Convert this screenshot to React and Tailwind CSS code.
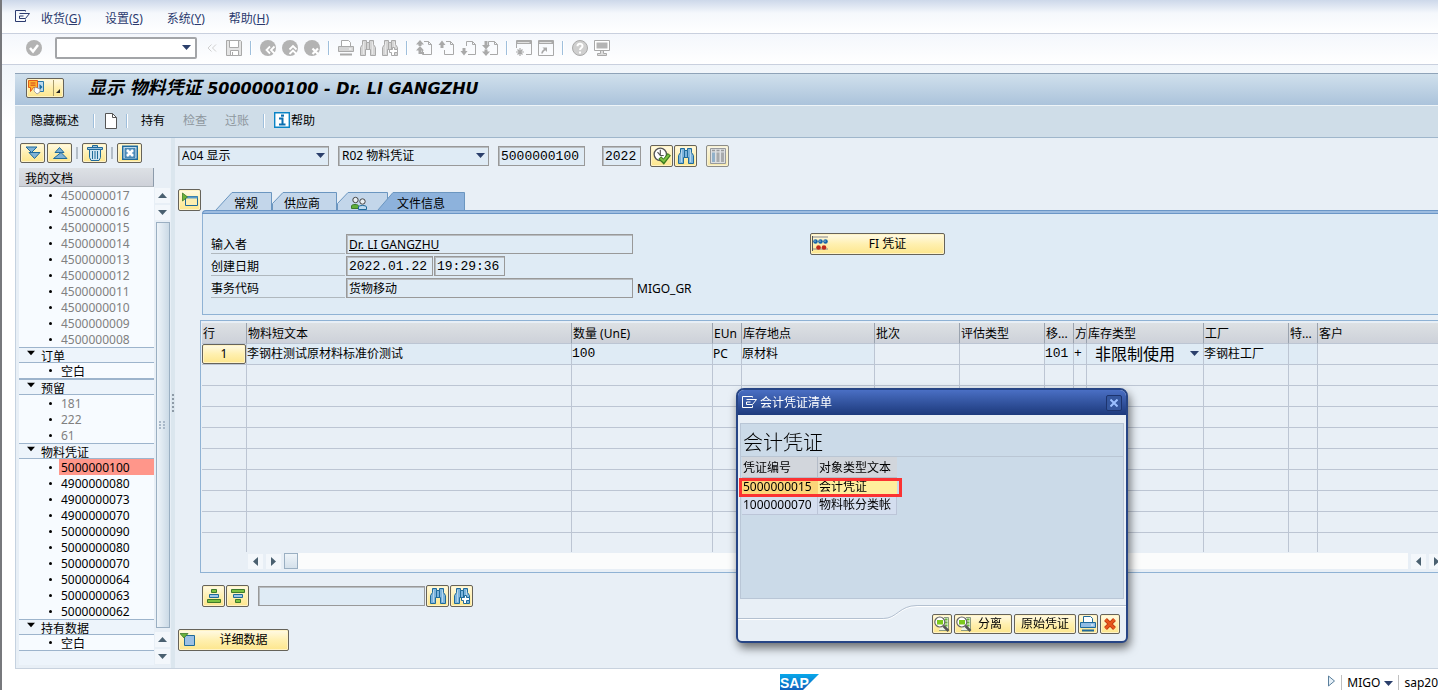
import React, { useState } from 'react';

const grey = '#a9a9a9';

const documents = [
    '4500000017', '4500000016', '4500000015', '4500000014', '4500000013',
    '4500000012', '4500000011', '4500000010', '4500000009', '4500000008'
];

const groups = [
    { title: '订单', items: [{ text: '空白', line: true }] },
    { title: '预留', items: [{ text: '181', muted: true }, { text: '222', muted: true }, { text: '61', muted: true }] },
    {
        title: '物料凭证',
        items: [
            { text: '5000000100', selected: true }, { text: '4900000080' }, { text: '4900000073' },
            { text: '4900000070' }, { text: '5000000090' }, { text: '5000000080' }, { text: '5000000070' },
            { text: '5000000064' }, { text: '5000000063' }, { text: '5000000062' }
        ]
    },
    { title: '持有数据', items: [{ text: '空白', line: true }] }
];

const columns = [
    { title: '行', width: 'w-[45px]' },
    { title: '物料短文本', width: 'w-[325px]' },
    { title: '数量 (UnE)', width: 'w-[141px]' },
    { title: 'EUn', width: 'w-[29px]' },
    { title: '库存地点', width: 'w-[133px]' },
    { title: '批次', width: 'w-[85px]' },
    { title: '评估类型', width: 'w-[85px]' },
    { title: '移...', width: 'w-[29px]' },
    { title: '方', width: 'w-[13px]' },
    { title: '库存类型', width: 'w-[117px]' },
    { title: '工厂', width: 'w-[85px]' },
    { title: '特...', width: 'w-[29px]' },
    { title: '客户', width: '' }
];

function Icon({ children, size = 16, className = '' }) {
    return (
        <svg width={size} height={size} viewBox="0 0 16 16" fill="none" className={`shrink-0 ${className}`} aria-hidden="true">
            {children}
        </svg>
    );
}

function Arrow({ dir = 'down', color = '#2b3f6b', size = 9 }) {
    const points = {
        down: '0,2 9,2 4.5,7',
        up: '0,7 9,7 4.5,2',
        left: '7,0 7,9 2,4.5',
        right: '2,0 2,9 7,4.5'
    };
    return (
        <svg width={size} height={size} viewBox="0 0 9 9" className="shrink-0" aria-hidden="true">
            <polygon points={points[dir]} fill={color} />
        </svg>
    );
}

function MenuIcon({ color = '#2b3a6e' }) {
    return (
        <svg width="16" height="13" viewBox="0 0 16 13" fill="none" stroke={color} className="shrink-0" aria-hidden="true">
            <path d="M10.500 1.500V.5H.5v11h10V9.500" />
            <path d="M4.500 3.500h10l-4 5h-6v-2.500h4" />
        </svg>
    );
}

function Binoculars({ fill, stroke, plus }) {
    return (
        <Icon>
            <path d="M2.500 .5h4v2h3v-2h4v4l2 3v8h-5v-6h-5v6h-5v-8l2-3z" fill={fill} stroke={stroke} />
            <path d="M6.500 2.500v7M9.500 2.500v7" stroke={stroke} />
            <path d="M3.500 2v12M12.500 2v12" stroke="#fff" strokeOpacity=".45" />
            {plus && <path d="M10.500 7.500h2v2h3v3h-3v3h-3v-3h-2v-3h3z" fill="#fff" stroke={stroke} />}
        </Icon>
    );
}

function Printer({ stroke, fill }) {
    return (
        <Icon>
            <path d="M3.500 6V.5h7l2 2V6" fill="#fff" stroke={stroke} />
            <path d="M.5 6.500h15v5H.5z" fill={fill} stroke={stroke} />
            <path d="M11 9h2.500" stroke="#fff" />
            <path d="M2 14.500h12" stroke={stroke} strokeWidth="2" />
        </Icon>
    );
}

function PageArrow({ kind }) {
    const up = 'M4 .5L7.500 5H5.500v3h-3V5H.5z';
    const down = 'M4 15.500L.5 11h2V8h3v3h2z';
    return (
        <Icon>
            <path d={kind === 'down' || kind === 'last' ? 'M6.500 6V1.500h6l3 3v10H8' : 'M8 1.500h4.500l3 3v10h-9V10'} stroke={grey} />
            <path d="M12.500 1.500v3h3" stroke={grey} />
            {kind === 'first' && <path d="M4 0L8 4.500H5.500V6h-3V4.500H0zM4 6L8 10.500H5.500V12H8v2H2.500v-3.500H0z" fill={grey} />}
            {kind === 'up' && <path d={up} fill={grey} />}
            {kind === 'down' && <path d={down} fill={grey} />}
            {kind === 'last' && <path d="M4 9.500L0 5h2.500V1h3v4H8zM4 16L0 11.500h2.500v-2h3v2H8z" fill={grey} />}
        </Icon>
    );
}

function RoundIcon({ children }) {
    return (
        <Icon>
            <circle cx="8" cy="8" r="8" fill="#b3b3b3" />
            {children}
        </Icon>
    );
}

function ToolButton({ label, children }) {
    return (
        <button type="button" aria-label={label} className="flex w-[22px] shrink-0 items-center justify-center">
            {children}
        </button>
    );
}

function Divider({ className = '' }) {
    return (
        <span className={`flex w-3 shrink-0 justify-center ${className}`}>
            <span className="h-[14px] w-[2px] border-r border-white bg-[#9fbfdc]" />
        </span>
    );
}

function YellowButton({ label, className = '', children, onClick }) {
    return (
        <button
            type="button"
            aria-label={label}
            onClick={onClick}
            className={`flex shrink-0 items-center justify-center rounded-xs border border-[#66635a] bg-linear-to-b from-[#fffae6] via-[#fff0b0] to-[#fde68c] shadow-[inset_0_0_0_1px_#fff3c4] ${className}`}
        >
            {children}
        </button>
    );
}

function DropDown({ label, options }) {
    return (
        <div className="relative h-5 w-[151px] shrink-0">
            <select
                aria-label={label}
                className="block h-full w-full appearance-none border border-[#999] bg-[#dfebf5] pl-[3px] text-xs shadow-[inset_1px_1px_0_#b8bcc0]"
            >
                {options.map((o) => <option key={o}>{o}</option>)}
            </select>
            <span className="pointer-events-none absolute top-[5px] right-1"><Arrow /></span>
        </div>
    );
}

const fieldClass = 'h-5 shrink-0 border border-[#999] bg-[#dfebf5] px-[2px] shadow-[inset_1px_1px_0_#b8bcc0]';
const monoClass = 'font-["Liberation_Mono",monospace] text-[13px]';

function MenuBar() {
    const menus = [['收货', 'G'], ['设置', 'S'], ['系统', 'Y'], ['帮助', 'H']];
    return (
        <nav className="flex h-[34px] shrink-0 items-center border-b border-[#c9d0de] bg-linear-to-b from-[#cdd8ea] via-[#f5f8fc] via-40% to-white pl-[13px] text-[#2b3a6e]">
            <MenuIcon />
            <div className="ml-[10px] flex gap-6 pt-1">
                {menus.map(([text, key]) => (
                    <button key={key} type="button">{text}(<span className="underline">{key}</span>)</button>
                ))}
            </div>
        </nav>
    );
}

function ToolBar() {
    return (
        <div className="flex h-[31px] shrink-0 items-center border-b border-[#c9d0de] bg-linear-to-b from-[#f4f7fc] to-white pb-[2px] pl-6">
            <button type="button" aria-label="回车">
                <RoundIcon><path d="M4 8l3 3.500L12 5" stroke="#fff" strokeWidth="2.500" /></RoundIcon>
            </button>
            <div className="relative mr-1 ml-[13px] h-[22px] w-[142px] shrink-0">
                <input aria-label="命令" className="block h-full w-full rounded-xs border-2 border-[#a3a5a8] bg-white px-1 outline-none" />
                <button type="button" aria-label="历史" className="absolute top-[6px] right-[6px]"><Arrow /></button>
            </div>
            <ToolButton label="收起">
                <Icon><path d="M7.500 4.500L4 8l3.500 3.500M12 4.500L8.500 8l3.500 3.500" stroke="#d0d0d0" /></Icon>
            </ToolButton>
            <ToolButton label="保存">
                <Icon>
                    <path d="M.5.500h14l1 1v14H.5z" fill="#e4e4e4" stroke={grey} />
                    <path d="M3.500.500h9v7h-9z" fill="#fff" stroke={grey} />
                    <path d="M4.500 10.500h8v5h-8z" fill="#fff" stroke={grey} />
                    <path d="M6.500 12v3" stroke={grey} />
                </Icon>
            </ToolButton>
            <Divider />
            <ToolButton label="返回">
                <RoundIcon><path d="M10 6.500L6.500 10l3.500 3.500M14.500 6.500L11 10l3.500 3.500" stroke="#fff" strokeWidth="1.800" /></RoundIcon>
            </ToolButton>
            <ToolButton label="退出">
                <RoundIcon><path d="M7.500 9.500L11 6l3.500 3.500M7.500 14L11 10.500l3.500 3.500" stroke="#fff" strokeWidth="1.800" /></RoundIcon>
            </ToolButton>
            <ToolButton label="取消">
                <RoundIcon><path d="M8.500 8.500l5.500 5.500M14 8.500L8.500 14" stroke="#fff" strokeWidth="2.200" /></RoundIcon>
            </ToolButton>
            <Divider />
            <ToolButton label="打印"><Printer stroke={grey} fill="#d5d5d5" /></ToolButton>
            <ToolButton label="查找"><Binoculars fill="#d5d5d5" stroke={grey} /></ToolButton>
            <ToolButton label="继续查找"><Binoculars fill="#d5d5d5" stroke={grey} plus /></ToolButton>
            <Divider />
            <ToolButton label="第一页"><PageArrow kind="first" /></ToolButton>
            <ToolButton label="上一页"><PageArrow kind="up" /></ToolButton>
            <ToolButton label="下一页"><PageArrow kind="down" /></ToolButton>
            <ToolButton label="最后一页"><PageArrow kind="last" /></ToolButton>
            <Divider />
            <ToolButton label="新建会话">
                <Icon>
                    <path d="M.5 8V.5h15v14H10" stroke={grey} />
                    <path d="M.5 2.500h15" stroke={grey} strokeWidth="3" />
                    <path d="M1.500 2.500h12" stroke="#e0e0e0" />
                    <path d="M4 8v8M0 12h8M1.500 9.500l5 5M6.500 9.500l-5 5" stroke={grey} strokeWidth="1.200" />
                </Icon>
            </ToolButton>
            <ToolButton label="快捷方式">
                <Icon>
                    <path d="M.5.500h15v15H.5z" stroke={grey} />
                    <path d="M.5 2.500h15" stroke={grey} strokeWidth="3" />
                    <path d="M1.500 2.500h12" stroke="#e0e0e0" />
                    <path d="M4 13.500c0-2 1-3 3.500-4.500" stroke={grey} strokeWidth="1.500" />
                    <path d="M4.500 7.500h4.500V12z" fill={grey} />
                </Icon>
            </ToolButton>
            <Divider />
            <ToolButton label="帮助">
                <Icon>
                    <circle cx="8" cy="8" r="7.500" fill="#cfcfcf" stroke={grey} />
                    <path d="M5.500 6.200C5.500 3 10.500 3 10.500 6c0 2-2.500 2-2.500 4M8 11.500v2" stroke="#fff" strokeWidth="2" />
                </Icon>
            </ToolButton>
            <ToolButton label="布局">
                <Icon>
                    <path d="M.5.500h15v10H.5z" fill="#fff" stroke={grey} />
                    <path d="M2.500 2.500h11v6h-11z" fill="#b4b4b4" />
                    <path d="M6.500 11v2.500h-3v2h9v-2h-3V11" fill="#ddd" stroke={grey} />
                </Icon>
            </ToolButton>
        </div>
    );
}

function TitleBar() {
    return (
        <header className="flex h-8 shrink-0 items-center border-t border-[#8fa3b8] bg-linear-to-b from-[#d0e0ec] to-[#abc3db] pb-[3px] pl-[11px]">
            <YellowButton label="服务" className="h-5 w-[38px]">
                <svg width="36" height="18" viewBox="0 0 36 18" fill="none" aria-hidden="true">
                    <path d="M10.500 2.500h6v10h-6z" fill="#bcd9ee" stroke="#2a78a8" />
                    <path d="M12.500 5l3 3-3 3z" fill="#1b6a9e" />
                    <path d="M1.500 1.500h9v7h-4l-3 4v-4h-2z" fill="#ffb52e" stroke="#e05a1a" />
                    <path d="M3.500 4h5M3.500 6.200h5" stroke="#d2451e" />
                    <path d="M8 8l5 2v3l-3 2-3-3z" fill="#fff" stroke="#888" strokeWidth=".7" />
                    <path d="M26.500 1v16" stroke="#a89c6c" />
                    <path d="M33 10v4h-4z" fill="#222" />
                </svg>
            </YellowButton>
            <h1 className="ml-6 truncate font-['DejaVu_Sans','Noto_Sans_CJK_SC',sans-serif] text-base leading-6 font-bold text-black italic">
                <span className="text-lg leading-6">显示</span> <span className="text-lg leading-6">物料凭证</span> 5000000100 - Dr. LI GANGZHU
            </h1>
        </header>
    );
}

function FunctionBar() {
    return (
        <div className="flex h-[33px] shrink-0 items-center border-t border-b border-t-[#eef4f8] border-b-[#9fb6cb] bg-[#cfdde8] pb-px pl-4">
            <button type="button">隐藏概述</button>
            <Divider className="ml-[9px]" />
            <button type="button" aria-label="新建" className="ml-[3px]">
                <Icon><path d="M2.500.500h7l4 4v11h-11z" fill="#fff" stroke="#555" /><path d="M9.500.500v4h4" stroke="#555" /></Icon>
            </button>
            <Divider className="ml-[2px]" />
            <button type="button" className="ml-2">持有</button>
            <button type="button" disabled className="ml-[18px] text-[#8e979e]">检查</button>
            <button type="button" disabled className="ml-[18px] text-[#8e979e]">过账</button>
            <Divider className="ml-[9px]" />
            <button type="button" className="ml-1 flex items-center gap-px">
                <Icon className="mb-[2px]">
                    <path d="M.7.700h14.600v14.600H.7z" fill="#fff" stroke="#0a84c6" strokeWidth="1.400" />
                    <path d="M5 6.500h3.500V12M5 12.500h6.500" stroke="#0a6db0" strokeWidth="2" />
                    <path d="M7 2.500h3v2.200H7z" fill="#0a6db0" />
                </Icon>
                帮助
            </button>
        </div>
    );
}

function TreeItem({ text, muted, selected, line }) {
    return (
        <li className={`flex h-4 items-center bg-[#f7fbff] leading-[18px] ${line ? 'border-b border-[#9db4cc]' : ''}`}>
            <span className="ml-[30px] h-[3px] w-[3px] shrink-0 rounded-full bg-black" />
            <span className={`ml-[7px] h-4 flex-1 pl-[2px] ${selected ? 'bg-[#ff968a]' : ''} ${muted ? 'text-[#808080]' : 'text-black'}`}>{text}</span>
        </li>
    );
}

function ScrollButton({ dir, label }) {
    return (
        <button type="button" aria-label={label} className="flex h-[15px] w-[15px] shrink-0 items-center justify-center bg-[#f3f7fb]">
            <Arrow dir={dir} color="#4a6070" />
        </button>
    );
}

function Overview() {
    const blue = '#1f6a9a';
    return (
        <aside className="flex shrink-0 border-l border-[#c5d2e0] pl-[3px]">
            <div className="flex w-[135px] flex-col">
                <div className="mt-[5px] flex items-center pl-px">
                    <YellowButton label="全部展开" className="h-5 w-[25px]">
                        <Icon>
                            <path d="M1 2h11L6.500 7.500z" fill="#7fb2d6" stroke={blue} />
                            <path d="M4 7.500h11L9.500 13.500z" fill="#7fb2d6" stroke={blue} />
                        </Icon>
                    </YellowButton>
                    <YellowButton label="全部折叠" className="ml-[2px] h-5 w-[25px]">
                        <Icon>
                            <path d="M3 7.500L7.500 2.500l4.500 5z" fill="#7fb2d6" stroke={blue} />
                            <path d="M1.500 13.500L9 7.500l6 6z" fill="#7fb2d6" stroke={blue} />
                        </Icon>
                    </YellowButton>
                    <span className="mx-1 h-3 w-[2px] bg-[#b4bec8]" />
                    <YellowButton label="删除" className="h-5 w-[25px]">
                        <Icon>
                            <path d="M5.500 2.500v-2h5v2M.5 4.500v-2h15v2z" fill="#9cc4e0" stroke={blue} />
                            <path d="M2.500 4.500h11v8l-1.500 3H4l-1.500-3z" fill="#cfe4f2" stroke={blue} />
                            <path d="M5.500 6v8M8 6v8M10.500 6v8" stroke={blue} />
                        </Icon>
                    </YellowButton>
                    <span className="mx-1 h-3 w-[2px] bg-[#b4bec8]" />
                    <YellowButton label="关闭" className="h-5 w-[25px]">
                        <Icon>
                            <path d="M.7 1.200h14.600v13H.7z" fill="#bcd9ee" stroke={blue} strokeWidth="1.400" />
                            <path d="M3 3.500h10v9H3z" fill="#5d97c2" stroke={blue} strokeWidth=".6" />
                            <path d="M5 5l6 6M11 5l-6 6" stroke="#fff" strokeWidth="2.500" />
                        </Icon>
                    </YellowButton>
                </div>
                <h2 className="mt-[5px] h-[19px] border-r border-b border-r-[#8c9bab] border-b-[#b0b6bc] bg-linear-to-b from-[#dde1e5] to-[#ced1d9] pl-[6px] leading-[22px]">我的文档</h2>
                <ul>
                    {documents.map((d) => <TreeItem key={d} text={d} muted />)}
                </ul>
                {groups.map((g) => (
                    <section key={g.title}>
                        <h3 className="flex h-4 items-start border-y border-[#9db4cc] bg-[#edf4fb]">
                            <span className="mt-px ml-2"><Arrow color="#000" size={8} /></span>
                            <span className="ml-[6px] leading-[18px]">{g.title}</span>
                        </h3>
                        <ul>
                            {g.items.map((i) => <TreeItem key={i.text} {...i} />)}
                        </ul>
                    </section>
                ))}
                <div className="h-[14px] bg-[#edf4fb]" />
            </div>
            <div className="mt-[50px] mb-1 flex w-[17px] flex-col items-center gap-[2px]">
                <ScrollButton dir="up" label="向上" />
                <ScrollButton dir="down" label="向下" />
                <div className="mb-[2px] flex w-[14px] flex-1 items-center justify-center border border-[#9aafc2] bg-linear-to-r from-[#eef4f9] to-[#cbdae6]">
                    <svg width="7" height="8" viewBox="0 0 7 8" fill="#a8b8c8" aria-hidden="true">
                        <path d="M0 0h2v2H0zM4 0h2v2H4zM0 3h2v2H0zM4 3h2v2H4zM0 6h2v2H0zM4 6h2v2H4z" />
                    </svg>
                </div>
                <ScrollButton dir="up" label="上一行" />
                <ScrollButton dir="down" label="下一行" />
            </div>
        </aside>
    );
}

function Splitter() {
    return (
        <div className="flex w-1 shrink-0 items-center justify-center bg-[#dbe6ee]">
            <svg width="3" height="18" viewBox="0 0 3 18" className="shrink-0" fill="#8e9aa6" aria-hidden="true">
                <path d="M0 0h2v2H0zM0 4h2v2H0zM0 8h2v2H0zM0 12h2v2H0zM0 16h2v2H0z" />
            </svg>
        </div>
    );
}

function TabButton({ width, view, path, active, className, onClick, label, children }) {
    return (
        <button
            type="button"
            role="tab"
            aria-selected={active}
            aria-label={label}
            onClick={onClick}
            className={`relative flex h-[18px] shrink-0 items-center ${active ? 'z-10' : ''} ${width} ${className}`}
        >
            <svg viewBox={view} className="absolute inset-0 h-full w-full" aria-hidden="true">
                <path d={path} fill={active ? '#8db2dc' : '#c3d6ea'} stroke="#6b96c0" />
            </svg>
            <span className="relative pt-[5px]">{children}</span>
        </button>
    );
}

function Tabs() {
    const [tab, setTab] = useState(3);
    return (
        <div role="tablist" className="mt-[3px] flex pl-[13px]">
            <TabButton width="w-[57px]" view="0 0 57 18" path="M.5 18.500L17 .5h39.500v18" className="pl-[19px]" active={tab === 0} onClick={() => setTab(0)}>常规</TabButton>
            <TabButton width="w-[65px]" view="0 0 65 18" path="M.5 18.500v-7L11 .5h53.500v18" className="pl-3" active={tab === 1} onClick={() => setTab(1)}>供应商</TabButton>
            <TabButton width="w-[51px]" view="0 0 51 18" path="M.5 18.500v-7L11 .5h39.500v18" className="pl-[14px]" label="合作伙伴" active={tab === 2} onClick={() => setTab(2)}>
                <Icon>
                    <path d="M.5 12.500V10c0-2 7-2 7 0v2.500z" fill="#5fae3a" stroke="#3d7a2a" />
                    <circle cx="4.500" cy="4" r="2.700" fill="#e8eef2" stroke="#444" />
                    <path d="M7.500 13.500V11c0-2 8-2 8 0v2.500z" fill="#bcd9f0" stroke="#1f6a9a" />
                    <circle cx="11.500" cy="5.500" r="2.700" fill="#e8eef2" stroke="#444" />
                </Icon>
            </TabButton>
            <TabButton width="w-[88px]" view="0 0 88 18" path="M.5 18.500L16 .5h71.500v18" className="-ml-[11px] pl-5" active={tab === 3} onClick={() => setTab(3)}>文件信息</TabButton>
        </div>
    );
}

function Field({ id, label, children }) {
    return (
        <div className="flex h-5 items-stretch">
            <label htmlFor={id} className="mr-px w-[134px] shrink-0 border-b border-[#b0b8be] pt-[2px] leading-[18px]">{label}</label>
            {children}
        </div>
    );
}

function DocumentInfo() {
    return (
        <div className="flex h-[101px] items-start border-b border-l border-[#8fb2d4] bg-[#dfebf5] pt-5 pl-2">
            <div className="flex w-[599px] flex-col gap-[2px]">
                <Field id="user" label="输入者">
                    <input id="user" readOnly defaultValue="Dr. LI GANGZHU" className={`${fieldClass} w-[287px] underline`} />
                </Field>
                <Field id="date" label="创建日期">
                    <input id="date" readOnly defaultValue="2022.01.22" className={`${fieldClass} ${monoClass} w-[87px]`} />
                    <input aria-label="时间" readOnly defaultValue="19:29:36" className={`${fieldClass} ${monoClass} ml-px w-[71px]`} />
                </Field>
                <Field id="tcode" label="事务代码">
                    <input id="tcode" readOnly defaultValue="货物移动" className={`${fieldClass} w-[287px]`} />
                    <span className="ml-1 leading-[22px]">MIGO_GR</span>
                </Field>
            </div>
            <YellowButton className="relative -mt-px h-[22px] w-[135px]">
                <svg width="16" height="16" viewBox="0 0 16 16" className="absolute top-[2px] left-px" aria-hidden="true">
                    <path d="M0 1h16M0 13h16" stroke="#888" />
                    <path d="M.5 0v15" stroke="#555" />
                    <g fill="#1565a8"><circle cx="3.500" cy="5.500" r="2.300" /><circle cx="8.500" cy="5.500" r="2.300" /><circle cx="13.500" cy="5.500" r="2.300" /></g>
                    <g fill="#c02a1a"><circle cx="6.500" cy="11.500" r="2.300" /><circle cx="12" cy="11.500" r="2.300" /></g>
                    <g fill="#fff"><circle cx="3" cy="5" r=".6" /><circle cx="8" cy="5" r=".6" /><circle cx="13" cy="5" r=".6" /></g>
                </svg>
                <span className="ml-5">FI 凭证</span>
            </YellowButton>
        </div>
    );
}

function ItemTable() {
    const cell = 'h-[21px] border-r border-b border-[#bcc5d3] p-0 leading-5 whitespace-nowrap overflow-hidden last:border-r-0';
    const filled = `${cell} bg-[#dfebf5]`;
    return (
        <div className="mt-[5px] ml-[22px] border-y border-l border-[#8fb2d4] pt-[2px] pb-[3px] pl-px">
            <table className="w-full table-fixed border-separate border-spacing-0">
                <thead>
                    <tr>
                        {columns.map((c) => (
                            <th
                                key={c.title}
                                className={`h-[21px] overflow-hidden border-r border-b border-r-[#9aa3af] border-b-[#bcc5d3] bg-linear-to-b from-[#dde1e4] to-[#cdd1d9] p-0 pt-[2px] pl-px text-left leading-[18px] font-normal whitespace-nowrap last:border-r-0 ${c.width}`}
                            >
                                {c.title}
                            </th>
                        ))}
                    </tr>
                </thead>
                <tbody>
                    <tr>
                        <td className={cell}>
                            <YellowButton className="h-5 w-full">1</YellowButton>
                        </td>
                        <td className={filled}>李钢柱测试原材料标准价测试</td>
                        <td className={`${filled} ${monoClass}`}>100</td>
                        <td className={filled}>PC</td>
                        <td className={filled}>原材料</td>
                        <td className={cell} />
                        <td className={cell} />
                        <td className={`${filled} ${monoClass}`}>101</td>
                        <td className={`${filled} ${monoClass}`}>+</td>
                        <td className={filled}>
                            <div className="relative">
                                <select aria-label="库存类型" className="block h-5 w-full appearance-none bg-transparent pl-2 text-base leading-5">
                                    <option>非限制使用</option>
                                </select>
                                <span className="pointer-events-none absolute top-[5px] right-1"><Arrow /></span>
                            </div>
                        </td>
                        <td className={filled}>李钢柱工厂</td>
                        <td className={filled} />
                        <td className={cell} />
                    </tr>
                    {[1, 2, 3, 4, 5, 6, 7, 8].map((r) => (
                        <tr key={r}>
                            {columns.map((c) => <td key={c.title} className={cell} />)}
                        </tr>
                    ))}
                    <tr>
                        {columns.map((c) => <td key={c.title} className="h-[19px] border-r border-[#bcc5d3] p-0 last:border-r-0" />)}
                    </tr>
                </tbody>
            </table>
            <div className="mt-px flex h-4 items-center gap-[3px] overflow-hidden pl-[46px]">
                <ScrollButton dir="left" label="向左" />
                <ScrollButton dir="right" label="向右" />
                <div className="h-full flex-1 bg-[#fbfcfc]">
                    <div className="h-full w-[14px] border border-[#9aafc2] bg-linear-to-b from-[#eef4f9] to-[#d5e1eb]" />
                </div>
                <ScrollButton dir="left" label="前一列" />
                <div className="-mr-[6px]"><ScrollButton dir="right" label="后一列" /></div>
            </div>
        </div>
    );
}

function Content() {
    return (
        <main className="min-w-0 flex-1 pl-[3px]">
            <div className="mt-[7px] flex h-[22px] items-center">
                <DropDown label="操作" options={['A04 显示']} />
                <div className="ml-[9px]"><DropDown label="参考凭证" options={['R02 物料凭证']} /></div>
                <input aria-label="凭证编号" readOnly defaultValue="5000000100" className={`${fieldClass} ${monoClass} ml-[9px] w-[87px]`} />
                <input aria-label="年度" readOnly defaultValue="2022" className={`${fieldClass} ${monoClass} ml-[17px] w-[39px]`} />
                <YellowButton label="执行" className="ml-[9px] h-[22px] w-[23px]">
                    <Icon size={18}>
                        <circle cx="6.500" cy="6.500" r="5.500" fill="#fff" stroke="#555" strokeWidth="1.200" />
                        <path d="M6.500 2.500v5h3M4 4.500l2.500 3" stroke="#555" />
                        <path d="M6 9.500l3.500 3.500L14.500 6.500" stroke="#3d7a1e" strokeWidth="3.600" />
                        <path d="M6.500 10L9.500 12.500 14 7" stroke="#7cc242" strokeWidth="1.800" />
                    </Icon>
                </YellowButton>
                <YellowButton label="查找" className="ml-px h-[22px] w-[23px]"><Binoculars fill="#7db4dc" stroke="#1f6a9a" /></YellowButton>
                <YellowButton label="布局" className="ml-[9px] h-[22px] w-[23px] opacity-70">
                    <Icon>
                        <path d="M.5.500h15v15H.5z" fill="#d9d9d9" stroke="#777" />
                        <path d="M2 2.500h3M6.500 2.500h3M11 2.500h3" stroke="#777" strokeWidth="1.500" />
                        <path d="M2 4.500h3V14H2z" fill="#6f98b8" />
                        <path d="M6.500 4.500h3V14h-3zM11 4.500h3V14h-3z" fill="#8e8e8e" />
                    </Icon>
                </YellowButton>
            </div>

            <div className="mt-[22px] flex items-start gap-px">
                <YellowButton label="打开抬头数据" className="h-[22px] w-[23px]">
                    <Icon>
                        <path d="M3.500 4.500h12v9h-12z" fill="#fdeeb0" stroke="#1f6a9a" />
                        <path d="M4 5.500h11.500" stroke="#5a9cc8" strokeWidth="2" />
                        <path d="M.5 1l5 4-5 4z" fill="#6ab23a" stroke="#3d7a2a" strokeWidth=".8" />
                    </Icon>
                </YellowButton>
                <div className="min-w-0 flex-1">
                    <Tabs />
                    <div className="h-1 rounded-tl-sm border-y border-l border-[#6b96c6] bg-[#9dbce0]" />
                    <DocumentInfo />
                </div>
            </div>

            <ItemTable />

            <div className="mt-3 flex items-center pl-6">
                <YellowButton label="选择全部" className="h-[22px] w-[23px]">
                    <Icon>
                        <path d="M5.500 1.500h5v3h-5z" fill="#7cc242" stroke="#3d7a2a" />
                        <path d="M3.500 6.500h9v3h-9z" fill="#9cc4e8" stroke="#1f6a9a" />
                        <path d="M1.500 11.500h13v3h-13z" fill="#7cc242" stroke="#3d7a2a" />
                    </Icon>
                </YellowButton>
                <YellowButton label="取消选择" className="ml-px h-[22px] w-[23px]">
                    <Icon>
                        <path d="M1.500 1.500h13v3h-13z" fill="#7cc242" stroke="#3d7a2a" />
                        <path d="M3.500 6.500h9v3h-9z" fill="#9cc4e8" stroke="#1f6a9a" />
                        <path d="M5.500 11.500h5v3h-5z" fill="#7cc242" stroke="#3d7a2a" />
                    </Icon>
                </YellowButton>
                <input aria-label="搜索项目" className={`${fieldClass} ml-[9px] w-[167px]`} />
                <YellowButton label="搜索" className="ml-px h-[22px] w-[23px]"><Binoculars fill="#7db4dc" stroke="#1f6a9a" /></YellowButton>
                <YellowButton label="继续搜索" className="ml-px h-[22px] w-[23px]"><Binoculars fill="#7db4dc" stroke="#1f6a9a" plus /></YellowButton>
            </div>

            <YellowButton className="relative mt-[22px] h-[22px] w-[111px]">
                <svg width="16" height="16" viewBox="0 0 16 16" className="absolute top-[2px] left-px" aria-hidden="true">
                    <path d="M4.500 3.500h10v10h-10z" fill="#9cc0e4" stroke="#1f6a9a" />
                    <path d="M0 1.500h8L4 6z" fill="#6ab23a" stroke="#3d7a2a" strokeWidth=".8" />
                </svg>
                <span className="ml-5">详细数据</span>
            </YellowButton>
        </main>
    );
}

function SearchDoc() {
    return (
        <Icon>
            <path d="M10 1.500h4.500v13H5" fill="#eef4ea" stroke="#8a9a80" />
            <path d="M11 3.500h2.500M11 6.500h2.500M11 9.500h2.500" stroke="#6ab23a" strokeWidth="2" />
            <circle cx="5.800" cy="6" r="5" fill="#fff" stroke="#666" strokeWidth="1.200" />
            <path d="M3 4h6v4.500H3z" fill="#7cc91e" />
            <path d="M9.500 10l5 5" stroke="#555" strokeWidth="2.500" />
        </Icon>
    );
}

function Dialog({ onClose }) {
    const head = 'h-5 border-b border-[#b4bcc8] bg-[#d2d6dc] p-0 pt-[2px] text-left leading-[18px] font-normal';
    return (
        <div role="dialog" aria-label="会计凭证清单" className="fixed top-[388px] left-[736px] z-20 w-[392px] overflow-visible rounded-t-lg rounded-b-md border-2 border-[#274585] bg-[#e8eff6] shadow-[2px_5px_10px_rgba(0,0,0,0.55)]">
            <div className="flex h-[25px] items-center rounded-t-md bg-linear-to-b from-[#4a6fc4] to-[#1d3a7c] px-1 text-white">
                <MenuIcon color="#fff" />
                <span className="ml-[2px] flex-1">会计凭证清单</span>
                <button type="button" aria-label="关闭" onClick={onClose} className="flex h-4 w-4 items-center justify-center rounded-xs border border-[#1d346e] bg-[#35579f]">
                    <svg width="8" height="8" viewBox="0 0 8 8" aria-hidden="true"><path d="M.5.500l7 7M7.500.500l-7 7" stroke="#9cc0ff" strokeWidth="2" /></svg>
                </button>
            </div>
            <div className="mx-[2px] mt-2 h-[176px] border border-[#b9c6d6] bg-[#cbdae8]">
                <h2 className="h-[33px] border-b border-[#bac6d4] pt-[5px] pl-[2px] text-xl leading-7 font-light">会计凭证</h2>
                <div className="relative pl-px">
                    <table className="table-fixed border-separate border-spacing-0">
                        <thead>
                            <tr>
                                <th className={`${head} w-[76px] border-r pl-px`}>凭证编号</th>
                                <th className={`${head} w-[79px] pl-px`}>对象类型文本</th>
                            </tr>
                        </thead>
                        <tbody>
                            <tr>
                                <td className="h-[18px] bg-[#fcd579] p-0 pb-px pl-px leading-4">5000000015</td>
                                <td className="h-[18px] bg-[#ffee9c] p-0 pb-px pl-px leading-4">会计凭证</td>
                            </tr>
                            <tr>
                                <td className="h-[19px] border-r border-b border-[#bcc5d8] bg-[#d4deef] p-0 pl-px leading-[18px]">1000000070</td>
                                <td className="h-[19px] border-r border-b border-[#bcc5d8] bg-[#d4deef] p-0 pl-px leading-[18px]">物料帐分类帐</td>
                            </tr>
                        </tbody>
                    </table>
                    <span className="pointer-events-none absolute top-[21px] -left-[2px] h-[19px] w-[163px] border-[3px] border-[#fb3232]" />
                </div>
            </div>
            <div className="relative flex justify-end gap-[2px] pt-[15px] pr-[6px] pb-[7px]">
                <svg viewBox="0 0 390 16" preserveAspectRatio="none" className="absolute top-[5px] left-0 h-4 w-full" fill="none" aria-hidden="true">
                    <path d="M0 15.500h146c14 0 16-13 34-13h210" stroke="#fff" />
                    <path d="M0 14.500h146c14 0 16-13 34-13h210" stroke="#b3c0d0" />
                </svg>
                <YellowButton label="选择" className="relative h-5 w-5"><SearchDoc /></YellowButton>
                <YellowButton className="relative h-5 w-[58px] gap-[6px] pr-2"><SearchDoc />分离</YellowButton>
                <YellowButton className="relative h-5 w-[62px]">原始凭证</YellowButton>
                <YellowButton label="打印" className="relative h-5 w-5"><Printer stroke="#1f6a9a" fill="#8fbce4" /></YellowButton>
                <YellowButton label="取消" className="relative h-5 w-5" onClick={onClose}>
                    <Icon><path d="M3.500 3.500l9 9M12.500 3.500l-9 9" stroke="#c33a12" strokeWidth="4" /><path d="M3.500 3.500l9 9M12.500 3.500l-9 9" stroke="#e8581c" strokeWidth="2.400" /></Icon>
                </YellowButton>
            </div>
        </div>
    );
}

function StatusBar() {
    return (
        <footer className="flex h-[21px] shrink-0 items-start justify-between bg-white pt-1 whitespace-nowrap">
            <span className="w-[778px] shrink-0" />
            <svg width="40" height="17" viewBox="0 0 40 17" className="shrink-0" role="img" aria-label="SAP">
                <defs>
                    <linearGradient id="sap" x1="0" y1="0" x2="0" y2="1">
                        <stop offset="0" stopColor="#08a8ea" />
                        <stop offset="1" stopColor="#1161bd" />
                    </linearGradient>
                </defs>
                <path d="M0 1h39L23 17H0z" fill="url(#sap)" />
                <text x="0" y="15" fill="#fff" fontFamily="Liberation Sans, sans-serif" fontWeight="bold" fontSize="14">SAP</text>
            </svg>
            <div className="ml-auto flex h-[17px] items-center pt-[3px]">
                <svg width="9" height="12" viewBox="0 0 9 12" className="mb-1" aria-hidden="true"><path d="M1.500 1v10L7.500 6z" fill="#e6f0f8" stroke="#5a7f9c" /></svg>
                <span className="mx-[5px] h-4 w-px bg-[#c0c0c0]" />
                <button type="button" className="flex items-center gap-1">MIGO <Arrow /></button>
                <span className="mx-[5px] h-4 w-px bg-[#c0c0c0]" />
                <span>sap20</span>
            </div>
        </footer>
    );
}

function App() {
    const [showDialog, setShowDialog] = useState(true);

    return (
        <div className="flex h-screen flex-col overflow-hidden border-l-2 border-[#77787c] bg-white font-['Noto_Sans','Noto_Sans_CJK_SC',sans-serif] text-xs leading-4 text-black">
            <MenuBar />
            <ToolBar />
            <div className="flex min-h-0 flex-1 flex-col bg-linear-to-b from-[#f0f5fa] to-white to-10% pt-2 pl-[13px]">
                <TitleBar />
                <FunctionBar />
                <div className="flex min-h-0 flex-1 border-b border-[#c8d2de] bg-[#e8eff6]">
                    <Overview />
                    <Splitter />
                    <Content />
                </div>
            </div>
            <StatusBar />
            {showDialog && <Dialog onClose={() => setShowDialog(false)} />}
        </div>
    );
}

export default App;
